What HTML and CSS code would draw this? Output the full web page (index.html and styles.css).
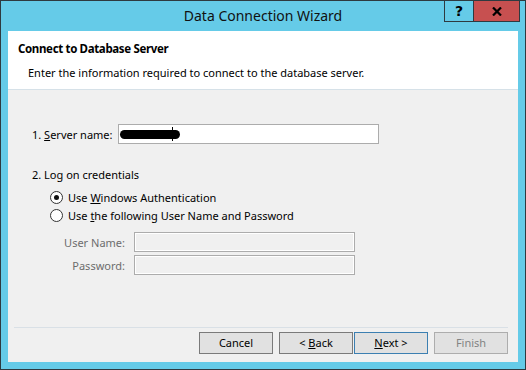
FILE: index.html
```html
<!DOCTYPE html>
<html>
<head>
<meta charset="utf-8">
<link rel="stylesheet" href="styles.css">
</head>
<body>
<div class="window">
  <div class="titlebar">
    <div class="spacer"></div>
    <div class="title">Data Connection Wizard</div>
    <div class="caption-buttons">
      <div class="cap-btn help">?</div>
      <div class="cap-btn close">
        <svg width="10" height="9" viewBox="0 0 10 9"><path d="M1 0.5 L9 8.5 M9 0.5 L1 8.5" stroke="#000" stroke-width="2.2"/></svg>
      </div>
    </div>
  </div>
  <div class="client">
    <div class="header">
      <div class="h-title">Connect to Database Server</div>
      <div class="h-sub">Enter the information required to connect to the database server.</div>
    </div>
    <div class="body">
      <div class="server-row">
        <span class="server-label">1. <u>S</u>erver name:</span>
        <div class="textbox">
          <span class="redact"></span><span class="caret"></span>
        </div>
      </div>
      <div class="section">2. Log on credentials</div>
      <div class="radio-row">
        <span class="radio checked"></span>
        <span>Use <u>W</u>indows Authentication</span>
      </div>
      <div class="radio-row">
        <span class="radio"></span>
        <span>Use <u>t</u>he following User Name and Password</span>
      </div>
      <div class="cred-grid">
        <span class="cred-label">User Name:</span>
        <div class="textbox disabled"></div>
        <span class="cred-label">Password:</span>
        <div class="textbox disabled"></div>
      </div>
    </div>
    <div class="footer">
      <div class="footer-line"></div>
      <div class="buttons">
        <div class="btn cancel"><span>Cancel</span></div>
        <div class="btn back"><span>&lt;&nbsp;<u>B</u>ack</span></div>
        <div class="btn next"><span><u>N</u>ext&nbsp;&gt;</span></div>
        <div class="btn finish"><span>Finish</span></div>
      </div>
    </div>
  </div>
</div>
</body>
</html>
```
FILE: styles.css
```css
* { box-sizing: border-box; }
html, body { margin: 0; padding: 0; }
body {
  width: 526px;
  height: 370px;
  overflow: hidden;
  font-family: "Segoe UI", "Noto Sans", sans-serif;
  font-size: 11px;
  color: #000;
}
.window {
  width: 526px;
  height: 370px;
  background: #65cbe8;
  border: 1px solid #2e3a40;
  display: flex;
  flex-direction: column;
}
.titlebar {
  height: 30px;
  display: grid;
  grid-template-columns: 1fr auto 1fr;
  align-items: start;
}
.title {
  font-size: 14px;
  line-height: 20px;
  margin-top: 5px;
  color: #111;
  white-space: nowrap;
}
.caption-buttons {
  justify-self: end;
  display: flex;
  margin-right: 5px;
  margin-top: -1px;
}
.cap-btn {
  height: 22px;
  border: 1px solid #2e3a40;
  display: flex;
  align-items: center;
  justify-content: center;
  font-weight: bold;
  font-size: 14px;
  font-family: "DejaVu Sans", sans-serif;
}
.help { width: 29px; border-right: none; }
.close { width: 47px; background: #c75050; }
.client {
  margin: 0 7px 7px 7px;
  flex: 1;
  background: #f0f0f0;
  display: flex;
  flex-direction: column;
}
.header {
  height: 59px;
  background: #fff;
  border-bottom: 1px solid #d6e1e8;
  padding: 9px 0 0 10px;
}
.h-title {
  font-weight: bold;
  font-size: 11.5px;
  letter-spacing: -0.35px;
  line-height: 18px;
}
.h-sub {
  margin-top: 7px;
  padding-left: 10px;
  line-height: 16px;
}
.body {
  height: 237px;
  padding: 34px 0 0 24px;
}
.server-row {
  display: flex;
  align-items: center;
}
.server-label { width: 86px; white-space: nowrap; }
.textbox {
  width: 261px;
  height: 20px;
  background: #fff;
  border: 1px solid #acacac;
  display: flex;
  align-items: center;
  padding-left: 1px;
}
.redact {
  width: 60px;
  height: 9px;
  background: #000;
  border-radius: 5px;
}
.caret {
  width: 1px;
  height: 14px;
  background: #000;
  margin-left: -8px;
}
.section {
  margin-top: 23px;
  line-height: 16px;
}
.radio-row {
  height: 18px;
  display: flex;
  align-items: center;
  padding-left: 18px;
  margin-top: 5px;
  white-space: nowrap;
}
.radio-row + .radio-row { margin-top: 0; }
.radio {
  width: 13px;
  height: 13px;
  border-radius: 50%;
  border: 1px solid #333;
  background: #fff;
  margin-right: 5px;
  display: flex;
  align-items: center;
  justify-content: center;
}
.radio.checked::after {
  content: "";
  width: 5px;
  height: 5px;
  border-radius: 50%;
  background: #111;
}
.cred-grid {
  margin-top: 8px;
  margin-left: 18px;
  display: grid;
  grid-template-columns: 75px 221px;
  column-gap: 9px;
  row-gap: 3px;
  align-items: center;
}
.cred-label {
  text-align: right;
  color: #6d6d6d;
}
.textbox.disabled {
  width: 221px;
  background: #f0f0f0;
  box-shadow: inset 0 0 0 1px #fff;
}
.footer {
  padding: 0 10px 8px 6px;
}
.footer-line {
  height: 1px;
  background: #d9e0e6;
}
.buttons {
  margin-top: 4px;
  display: flex;
  justify-content: flex-end;
}
.btn {
  width: 74px;
  height: 22px;
  background: #e1e1e1;
  border: 1px solid #7a7a7a;
  display: flex;
  align-items: center;
  justify-content: center;
  line-height: 16px;
  white-space: nowrap;
}
.back { margin-left: 6px; }
.next { margin-left: 1px; border-color: #3c7fb1; }
.finish { margin-left: 6px; color: #838383; border-color: #adadad; }
```
